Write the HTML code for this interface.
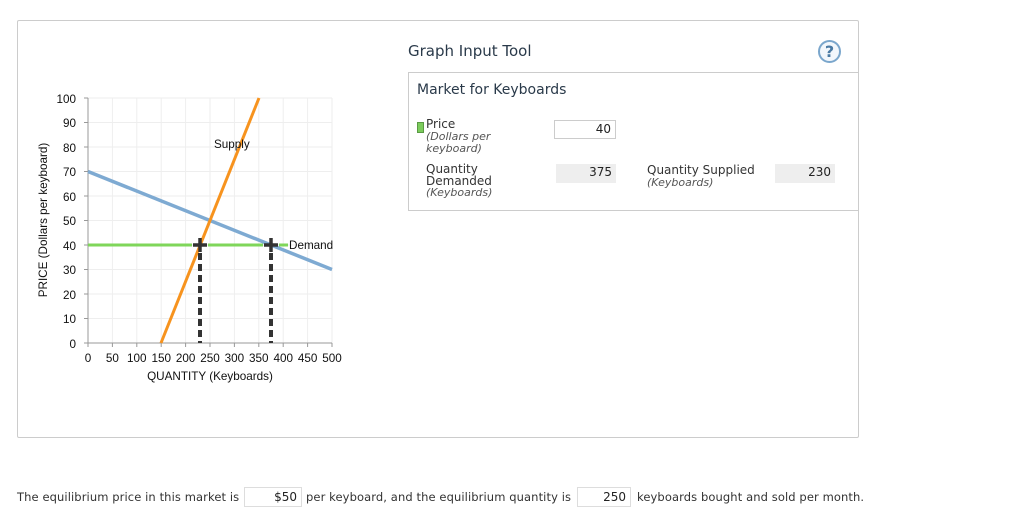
<!DOCTYPE html>
<html><head><meta charset="utf-8"><style>
body{margin:0;width:1024px;height:524px;background:#fff;position:relative;overflow:hidden;font-family:"DejaVu Sans","Liberation Sans",sans-serif;}
.abs{position:absolute}
.outer{left:17px;top:20px;width:840px;height:416px;border:1px solid #ccc;border-radius:2px}
.inner{left:408px;top:72px;width:450px;height:137px;border:1px solid #ccc;border-right:none}
.t{color:#333;font-size:12px;white-space:nowrap}
.i{font-style:italic;color:#555;font-size:11px;line-height:12px}
.box{border:1px solid #ddd;text-align:right;box-sizing:border-box;font-size:12px;padding-right:4px;line-height:17px;color:#222}
svg text{font-family:"Liberation Sans",Arial,sans-serif;font-size:11.7px;fill:#111}
</style></head><body>
<div class="abs outer"></div>
<div class="abs t" style="left:408px;top:42px;font-size:15px;color:#2a3a4a">Graph Input Tool</div>
<div class="abs" style="left:818px;top:40px;width:23px;height:23px;border:2px solid #7aa6cc;border-radius:50%;box-sizing:border-box;text-align:center;color:#4a7aa4;font-size:16px;font-weight:bold;line-height:19px;background:#f2f7fc">?</div>
<div class="abs inner"></div>
<div class="abs t" style="left:417px;top:82px;font-size:14px;color:#2a3a4a">Market for Keyboards</div>
<div class="abs" style="left:417px;top:122px;width:5px;height:9px;background:#7ccc5c;border:1px solid #5a9a44"></div>
<div class="abs t" style="left:426px;top:117px">Price</div>
<div class="abs i" style="left:426px;top:131px">(Dollars per<br>keyboard)</div>
<div class="abs box" style="left:554px;top:120px;width:62px;height:19px;border-color:#ccc">40</div>
<div class="abs t" style="left:426px;top:163px;line-height:12px">Quantity<br>Demanded</div>
<div class="abs i" style="left:426px;top:187px">(Keyboards)</div>
<div class="abs box" style="left:556px;top:164px;width:60px;height:19px;background:#eee;border:none">375</div>
<div class="abs t" style="left:647px;top:163px">Quantity Supplied</div>
<div class="abs i" style="left:647px;top:177px">(Keyboards)</div>
<div class="abs box" style="left:775px;top:164px;width:60px;height:19px;background:#eee;border:none">230</div>

<svg class="abs" style="left:0;top:0" width="400" height="400">
<g stroke="#eee" stroke-width="1">
<line x1="112.4" y1="98" x2="112.4" y2="343"/><line x1="136.8" y1="98" x2="136.8" y2="343"/><line x1="161.2" y1="98" x2="161.2" y2="343"/><line x1="185.6" y1="98" x2="185.6" y2="343"/><line x1="210" y1="98" x2="210" y2="343"/><line x1="234.4" y1="98" x2="234.4" y2="343"/><line x1="258.8" y1="98" x2="258.8" y2="343"/><line x1="283.2" y1="98" x2="283.2" y2="343"/><line x1="307.6" y1="98" x2="307.6" y2="343"/><line x1="332" y1="98" x2="332" y2="343"/>
<line x1="88" y1="98" x2="332" y2="98"/><line x1="88" y1="122.5" x2="332" y2="122.5"/><line x1="88" y1="147" x2="332" y2="147"/><line x1="88" y1="171.5" x2="332" y2="171.5"/><line x1="88" y1="196" x2="332" y2="196"/><line x1="88" y1="220.5" x2="332" y2="220.5"/><line x1="88" y1="245" x2="332" y2="245"/><line x1="88" y1="269.5" x2="332" y2="269.5"/><line x1="88" y1="294" x2="332" y2="294"/><line x1="88" y1="318.5" x2="332" y2="318.5"/>
</g>
<g stroke="#999" stroke-width="1">
<line x1="88" y1="98" x2="88" y2="343"/><line x1="88" y1="343" x2="332" y2="343"/>
<path d="M84 98h4M84 122.5h4M84 147h4M84 171.5h4M84 196h4M84 220.5h4M84 245h4M84 269.5h4M84 294h4M84 318.5h4M84 343h4"/>
<path d="M88 343v4M112.4 343v4M136.8 343v4M161.2 343v4M185.6 343v4M210 343v4M234.4 343v4M258.8 343v4M283.2 343v4M307.6 343v4M332 343v4"/>
</g>
<g text-anchor="end">
<text x="76" y="103">100</text><text x="76" y="127">90</text><text x="76" y="152">80</text><text x="76" y="176">70</text><text x="76" y="201">60</text><text x="76" y="225">50</text><text x="76" y="250">40</text><text x="76" y="274">30</text><text x="76" y="299">20</text><text x="76" y="323">10</text><text x="76" y="348">0</text>
</g>
<g text-anchor="middle">
<text x="88" y="362">0</text><text x="112.4" y="362">50</text><text x="136.8" y="362">100</text><text x="161.2" y="362">150</text><text x="185.6" y="362">200</text><text x="210" y="362">250</text><text x="234.4" y="362">300</text><text x="258.8" y="362">350</text><text x="283.2" y="362">400</text><text x="307.6" y="362">450</text><text x="332" y="362">500</text>
<text x="210" y="380">QUANTITY (Keyboards)</text>
<text transform="translate(47,220) rotate(-90)">PRICE (Dollars per keyboard)</text>
</g>
<line x1="88" y1="171.5" x2="332" y2="269.5" stroke="#7eaad2" stroke-width="3.5"/>
<line x1="161" y1="343" x2="259" y2="98" stroke="#f7931e" stroke-width="3"/>
<line x1="88" y1="245" x2="192" y2="245" stroke="#7fd65a" stroke-width="3"/>
<line x1="208" y1="245" x2="263" y2="245" stroke="#7fd65a" stroke-width="3"/>
<line x1="279" y1="245" x2="288" y2="245" stroke="#7fd65a" stroke-width="3"/>
<g stroke="#333">
<path d="M200 253v90M271 253v90" stroke-width="4" stroke-dasharray="7,4"/>
<path d="M193 245h14M200 238v14M264 245h14M271 238v14" stroke-width="3.5"/>
</g>
<text x="214" y="148">Supply</text>
<text x="289" y="249">Demand</text>
</svg>

<div class="abs t" style="left:17px;top:490px;font-size:11.5px;letter-spacing:0.1px">The equilibrium price in this market is</div>
<div class="abs box" style="left:244px;top:487px;width:58px;height:20px;line-height:18px">$50</div>
<div class="abs t" style="left:306px;top:490px;font-size:11.5px;letter-spacing:0.1px">per keyboard, and the equilibrium quantity is</div>
<div class="abs box" style="left:577px;top:487px;width:54px;height:20px;line-height:18px">250</div>
<div class="abs t" style="left:637px;top:490px;font-size:11.5px;letter-spacing:0.1px">keyboards bought and sold per month.</div>
</body></html>
